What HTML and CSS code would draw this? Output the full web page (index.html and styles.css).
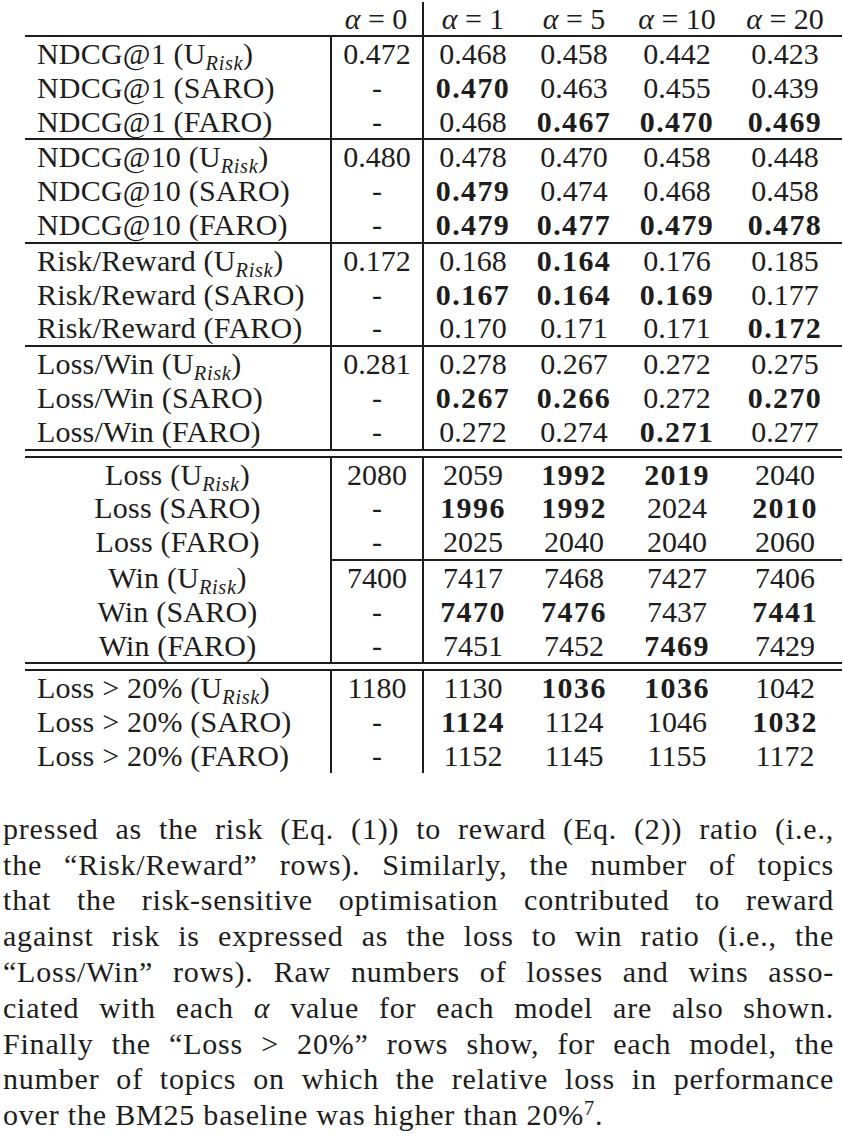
FILE: index.html
```html
<!DOCTYPE html>
<html lang="en">
<head>
<meta charset="utf-8">
<title>Risk-sensitive results</title>
<link rel="stylesheet" href="styles.css">
</head>
<body>
<table class="results">
  <colgroup>
    <col class="c-label"><col class="c-base"><col class="c-a1"><col class="c-a5"><col class="c-a10"><col class="c-a20">
  </colgroup>
  <thead>
    <tr class="head">
      <th class="lbl"></th>
      <th class="base-h"><i>α</i> = 0</th>
      <th><i>α</i> = 1</th>
      <th><i>α</i> = 5</th>
      <th><i>α</i> = 10</th>
      <th><i>α</i> = 20</th>
    </tr>
  </thead>
  <tbody>
    <tr class="top"><td class="lbl">NDCG@1 (U<sub>Risk</sub>)</td><td class="base">0.472</td><td>0.468</td><td>0.458</td><td>0.442</td><td>0.423</td></tr>
    <tr><td class="lbl">NDCG@1 (SARO)</td><td class="base">-</td><td><b>0.470</b></td><td>0.463</td><td>0.455</td><td>0.439</td></tr>
    <tr><td class="lbl">NDCG@1 (FARO)</td><td class="base">-</td><td>0.468</td><td><b>0.467</b></td><td><b>0.470</b></td><td><b>0.469</b></td></tr>

    <tr class="top"><td class="lbl">NDCG@10 (U<sub>Risk</sub>)</td><td class="base">0.480</td><td>0.478</td><td>0.470</td><td>0.458</td><td>0.448</td></tr>
    <tr><td class="lbl">NDCG@10 (SARO)</td><td class="base">-</td><td><b>0.479</b></td><td>0.474</td><td>0.468</td><td>0.458</td></tr>
    <tr><td class="lbl">NDCG@10 (FARO)</td><td class="base">-</td><td><b>0.479</b></td><td><b>0.477</b></td><td><b>0.479</b></td><td><b>0.478</b></td></tr>

    <tr class="top"><td class="lbl">Risk/Reward (U<sub>Risk</sub>)</td><td class="base">0.172</td><td>0.168</td><td><b>0.164</b></td><td>0.176</td><td>0.185</td></tr>
    <tr><td class="lbl">Risk/Reward (SARO)</td><td class="base">-</td><td><b>0.167</b></td><td><b>0.164</b></td><td><b>0.169</b></td><td>0.177</td></tr>
    <tr><td class="lbl">Risk/Reward (FARO)</td><td class="base">-</td><td>0.170</td><td>0.171</td><td>0.171</td><td><b>0.172</b></td></tr>

    <tr class="top"><td class="lbl">Loss/Win (U<sub>Risk</sub>)</td><td class="base">0.281</td><td>0.278</td><td>0.267</td><td>0.272</td><td>0.275</td></tr>
    <tr><td class="lbl">Loss/Win (SARO)</td><td class="base">-</td><td><b>0.267</b></td><td><b>0.266</b></td><td>0.272</td><td><b>0.270</b></td></tr>
    <tr><td class="lbl">Loss/Win (FARO)</td><td class="base">-</td><td>0.272</td><td>0.274</td><td><b>0.271</b></td><td>0.277</td></tr>

    <tr class="dbl"><td colspan="6"></td></tr>

    <tr><td class="lbl mid">Loss (U<sub>Risk</sub>)</td><td class="base">2080</td><td>2059</td><td><b>1992</b></td><td><b>2019</b></td><td>2040</td></tr>
    <tr><td class="lbl mid">Loss (SARO)</td><td class="base">-</td><td><b>1996</b></td><td><b>1992</b></td><td>2024</td><td><b>2010</b></td></tr>
    <tr><td class="lbl mid">Loss (FARO)</td><td class="base">-</td><td>2025</td><td>2040</td><td>2040</td><td>2060</td></tr>
    <tr class="cl"><td class="lbl mid">Win (U<sub>Risk</sub>)</td><td class="base">7400</td><td>7417</td><td>7468</td><td>7427</td><td>7406</td></tr>
    <tr><td class="lbl mid">Win (SARO)</td><td class="base">-</td><td><b>7470</b></td><td><b>7476</b></td><td>7437</td><td><b>7441</b></td></tr>
    <tr><td class="lbl mid">Win (FARO)</td><td class="base">-</td><td>7451</td><td>7452</td><td><b>7469</b></td><td>7429</td></tr>

    <tr class="dbl"><td colspan="6"></td></tr>

    <tr><td class="lbl">Loss &gt; 20% (U<sub>Risk</sub>)</td><td class="base">1180</td><td>1130</td><td><b>1036</b></td><td><b>1036</b></td><td>1042</td></tr>
    <tr><td class="lbl">Loss &gt; 20% (SARO)</td><td class="base">-</td><td><b>1124</b></td><td>1124</td><td>1046</td><td><b>1032</b></td></tr>
    <tr><td class="lbl">Loss &gt; 20% (FARO)</td><td class="base">-</td><td>1152</td><td>1145</td><td>1155</td><td>1172</td></tr>
  </tbody>
</table>

<p class="text">
  <span class="ln">pressed as the risk (Eq. (1)) to reward (Eq. (2)) ratio (i.e.,</span>
  <span class="ln">the “Risk/Reward” rows). Similarly, the number of topics</span>
  <span class="ln">that the risk-sensitive optimisation contributed to reward</span>
  <span class="ln">against risk is expressed as the loss to win ratio (i.e., the</span>
  <span class="ln">“Loss/Win” rows). Raw numbers of losses and wins asso-</span>
  <span class="ln">ciated with each <i>α</i> value for each model are also shown.</span>
  <span class="ln">Finally the “Loss &gt; 20%” rows show, for each model, the</span>
  <span class="ln">number of topics on which the relative loss in performance</span>
  <span class="ln last">over the BM25 baseline was higher than 20%<sup>7</sup>.</span>
</p>
</body>
</html>
```

FILE: styles.css
```css
html,
body {
  margin: 0;
  padding: 0;
  background: #ffffff;
}

body {
  color: #1d1d1d;
  font-family: "Liberation Serif", serif;
  font-size: 30px;
}

/* ---------- results table ---------- */

.results {
  margin: 2px 0 0 25px;
  width: 817px;
  table-layout: fixed;
  border-collapse: separate;
  border-spacing: 0;
  font-family: "Liberation Serif", serif;
  font-size: 30px;
}

.c-label { width: 305px; }
.c-base  { width: 94px; }
.c-a1    { width: 98px; }
.c-a5    { width: 104px; }
.c-a10   { width: 102px; }
.c-a20   { width: 114px; }

.results th,
.results td {
  padding: 0;
  font-weight: normal;
  text-align: center;
  white-space: nowrap;
  line-height: 33.8px;
  vertical-align: middle;
}

.results .head th {
  line-height: 33px;
}

.results .head .base-h {
  border-right: 2px solid #1d1d1d;
}

.results td.lbl {
  text-align: left;
  padding-left: 12px;
  letter-spacing: 0.2px;
}

.results td.lbl.mid {
  text-align: center;
  padding-left: 0;
}

.results td.base {
  border-left: 2px solid #1d1d1d;
  border-right: 2px solid #1d1d1d;
}

.results .top td {
  border-top: 2px solid #1d1d1d;
}

.results .cl td {
  border-top: 2px solid #1d1d1d;
}

.results .cl td.lbl {
  border-top-color: transparent;
}

.results .dbl td {
  height: 5px;
  line-height: 0;
  font-size: 0;
  border-top: 2px solid #1d1d1d;
  border-bottom: 2px solid #1d1d1d;
}

.results b {
  font-weight: bold;
  letter-spacing: 1.4px;
}

.results sub {
  font-size: 0.68em;
  font-style: italic;
  vertical-align: -0.28em;
  line-height: 0;
  letter-spacing: 0.6px;
}

i {
  font-style: italic;
}

/* ---------- body text ---------- */

.text {
  margin: 38px 0 0 3px;
  width: 831px;
  font-family: "Liberation Serif", serif;
  font-size: 30px;
  line-height: 35.8px;
  letter-spacing: 0.8px;
}

.text .ln {
  display: block;
  text-align: justify;
  text-align-last: justify;
}

.text .ln.last {
  text-align-last: left;
}

.text sup {
  font-size: 0.68em;
  vertical-align: 0.5em;
  line-height: 0;
}
```
